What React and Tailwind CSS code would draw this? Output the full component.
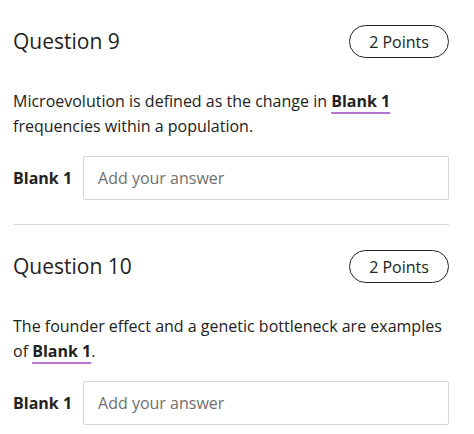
import React from 'react';

const questions = [
  {
    id: 9,
    points: 2,
    before: 'Microevolution is defined as the change in ',
    after: ' frequencies within a population.',
  },
  {
    id: 10,
    points: 2,
    before: 'The founder effect and a genetic bottleneck are examples of ',
    after: '.',
  },
];

const Question = ({ q, last }) => (
  <div className={last ? 'pt-[25px]' : 'pt-[25px] pb-[24px] border-b border-[#d9d9d9]'}>
    <div className="flex items-center justify-between">
      <h2 className="text-[21px] leading-[33px] text-[#222]">Question {q.id}</h2>
      <span className="h-[33px] w-[100px] flex items-center justify-center rounded-full border-[1.5px] border-[#222] text-[16px] text-[#222]">
        {q.points} Points
      </span>
    </div>
    <p className="mt-[31px] text-[16px] leading-[25px] text-[#222]">
      {q.before}
      <span className="font-bold underline decoration-2 underline-offset-[5px] decoration-[#b874d3]">Blank 1</span>
      {q.after}
    </p>
    <div className="mt-[17px] flex items-center gap-[11px]">
      <span className="font-bold text-[16px] text-[#222] whitespace-nowrap">Blank 1</span>
      <input
        placeholder="Add your answer"
        className="flex-1 h-[44px] px-[14px] border border-[#d6d6d6] rounded-[2px] text-[16px] placeholder:text-[#707070] outline-none"
      />
    </div>
  </div>
);

export default function App() {
  return (
    <div className="bg-white min-h-screen pl-[13px] pr-[25px]" style={{ fontFamily: '"Open Sans", sans-serif' }}>
      {questions.map((q, i) => (
        <Question key={q.id} q={q} last={i === questions.length - 1} />
      ))}
    </div>
  );
}
